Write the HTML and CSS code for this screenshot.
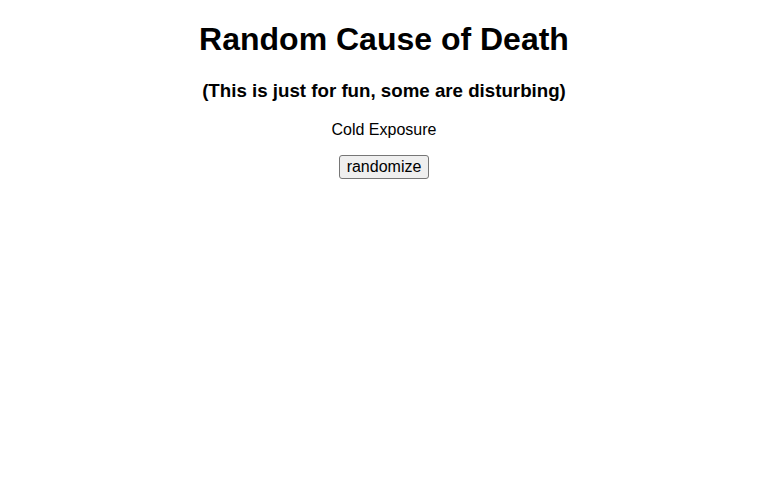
FILE: index.html
```html
<!DOCTYPE html>
<html>
<head>
  <title>Random Cause of Death</title>
  <link rel="stylesheet" href="styles.css">
</head>
<body>

  <div class="container">
    <h1>Random Cause of Death</h1>
    <h3>(This is just for fun, some are disturbing)</h3>
    <p id="cause">Cold Exposure</p>
    <button id="randomize" onclick="randomize()">randomize</button>
  </div>

  <script>
    const causes = [
      "Cold Exposure",
      "Heart Disease",
      "Falling Coconut",
      "Lightning Strike",
      "Shark Attack",
      "Old Age",
      "Choking on Food",
      "Snake Bite"
    ];

    function randomize() {
      const i = Math.floor(Math.random() * causes.length);
      document.getElementById("cause").innerText = causes[i];
    }
  </script>

</body>
</html>
```

FILE: styles.css
```css
body {
  font-family: "Liberation Sans", Arial, sans-serif;
  margin: 0;
  color: #000;
  background: #fff;
}

.container {
  text-align: center;
}

h1 {
  font-size: 32px;
  margin: 21.44px 0;
}

h3 {
  font-size: 18.72px;
  margin: 18.72px 0;
}

p {
  font-size: 16px;
  margin: 16px 0;
}

button {
  font-family: "Liberation Sans", Arial, sans-serif;
  font-size: 16px;
  color: #000;
  background: #efefef;
  border: 1px solid #767676;
  border-radius: 3px;
  padding: 2px 7px;
}
```
